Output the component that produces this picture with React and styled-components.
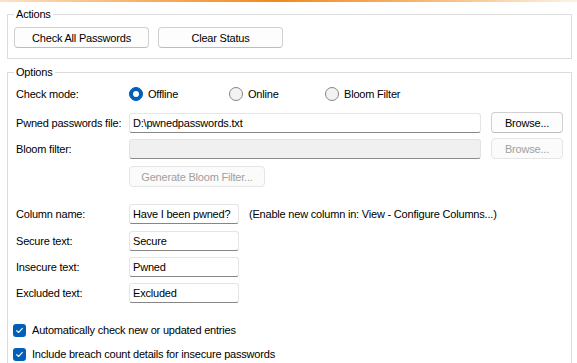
import React from "react";
import styled, { createGlobalStyle } from "styled-components";

const GlobalStyle = createGlobalStyle`
  body {
    margin: 0;
    background: #ffffff;
    font-family: "Liberation Sans", Arial, sans-serif;
    font-size: 11px;
    color: #000000;
  }
`;

const Page = styled.div`
  width: 577px;
  height: 363px;
  overflow: hidden;
  box-sizing: border-box;
  background: #ffffff;
`;

const Accent = styled.div`
  height: 2px;
  background: linear-gradient(
    to right,
    #fbe3c8 0%,
    #f6b064 25%,
    #f08a1c 48%,
    #f6b46e 72%,
    #fdf2e6 100%
  );
`;

const Content = styled.div`
  padding: 5px 5px 0 7px;
  display: flex;
  flex-direction: column;
  gap: 6px;
`;

const Group = styled.fieldset`
  margin: 0;
  min-width: 0;
  border: 1px solid #dcdcdc;
  padding: ${(p) => p.$pad};
`;

const Legend = styled.legend`
  margin-left: 1px;
  padding: 0 2px;
  line-height: 14px;
  font-size: 11px;
  letter-spacing: -0.2px;
`;

const ButtonRow = styled.div`
  display: flex;
  gap: 9px;
  padding-left: 1px;
`;

const Button = styled.button`
  box-sizing: border-box;
  width: ${(p) => p.$w}px;
  height: 21px;
  padding: 0;
  font: inherit;
  letter-spacing: -0.2px;
  color: ${(p) => (p.disabled ? "#a0a0a0" : "#000000")};
  background: ${(p) => (p.disabled ? "#fbfbfb" : "#fdfdfd")};
  border: 1px solid ${(p) => (p.disabled ? "#e5e5e5" : "#d0d0d0")};
  border-bottom-color: ${(p) => (p.disabled ? "#e5e5e5" : "#bdbdbd")};
  border-radius: 4px;
`;

const Row = styled.div`
  display: grid;
  grid-template-columns: ${(p) => p.$cols};
  column-gap: 10px;
  align-items: center;
  height: ${(p) => p.$h}px;
  margin-top: ${(p) => p.$mt}px;
`;

const Label = styled.span`
  padding-left: 3px;
  letter-spacing: -0.2px;
  white-space: nowrap;
`;

const Note = styled.span`
  letter-spacing: -0.2px;
  white-space: nowrap;
`;

const TextBox = styled.input`
  box-sizing: border-box;
  width: 100%;
  height: ${(p) => p.$h || 20}px;
  margin: 0;
  padding: 0 3px;
  font: inherit;
  letter-spacing: -0.2px;
  color: #000000;
  background: ${(p) => (p.disabled ? "#f0f0f0" : "#ffffff")};
  border: 1px solid ${(p) => (p.disabled ? "#e3e3e3" : "#e5e5e5")};
  border-bottom-color: ${(p) => (p.disabled ? "#8c8c8c" : "#868686")};
  border-radius: 3px;
  outline: none;
`;

const RadioGroup = styled.div`
  display: flex;
  align-items: center;
`;

const RadioItem = styled.label`
  display: flex;
  align-items: center;
  gap: 5px;
  width: ${(p) => (p.$w ? `${p.$w}px` : "auto")};
  letter-spacing: -0.2px;
`;

const RadioDot = styled.span`
  position: relative;
  box-sizing: border-box;
  width: 14px;
  height: 14px;
  border-radius: 50%;
  flex-shrink: 0;
  background: ${(p) => (p.$on ? "#005fb8" : "#f3f3f3")};
  border: 1px solid ${(p) => (p.$on ? "#005fb8" : "#878787")};

  &::after {
    content: "";
    display: ${(p) => (p.$on ? "block" : "none")};
    position: absolute;
    left: 3px;
    top: 3px;
    width: 6px;
    height: 6px;
    border-radius: 50%;
    background: #ffffff;
  }
`;

const CheckRow = styled.label`
  display: flex;
  align-items: center;
  gap: 6px;
  height: 16px;
  margin-top: ${(p) => p.$mt}px;
  letter-spacing: -0.2px;
`;

const CheckBox = styled.span`
  display: flex;
  align-items: center;
  justify-content: center;
  width: 13px;
  height: 13px;
  border-radius: 3px;
  background: #005fb8;
  flex-shrink: 0;
`;

function Radio({ on, w, children }) {
  return (
    <RadioItem $w={w}>
      <RadioDot $on={on} />
      {children}
    </RadioItem>
  );
}

function Check({ mt, children }) {
  return (
    <CheckRow $mt={mt}>
      <CheckBox>
        <svg width="9" height="9" viewBox="0 0 9 9">
          <polyline
            points="1.6,4.7 3.5,6.5 7.4,2.4"
            fill="none"
            stroke="#ffffff"
            strokeWidth="1.1"
            strokeLinecap="round"
            strokeLinejoin="round"
          />
        </svg>
      </CheckBox>
      {children}
    </CheckRow>
  );
}

export default function App() {
  const fileCols = "106px 352px 72px";
  const textCols = "106px 110px auto";

  return (
    <Page>
      <GlobalStyle />
      <Accent />
      <Content>
        <Group $pad="6px 5px 10px">
          <Legend>Actions</Legend>
          <ButtonRow>
            <Button $w={135}>Check All Passwords</Button>
            <Button $w={125}>Clear Status</Button>
          </ButtonRow>
        </Group>

        <Group $pad="0 5px 20px">
          <Legend>Options</Legend>

          <Row $cols="106px auto" $h={20} $mt={5}>
            <Label>Check mode:</Label>
            <RadioGroup>
              <Radio on w={100}>Offline</Radio>
              <Radio w={96}>Online</Radio>
              <Radio>Bloom Filter</Radio>
            </RadioGroup>
          </Row>

          <Row $cols={fileCols} $h={21} $mt={8}>
            <Label>Pwned passwords file:</Label>
            <TextBox defaultValue="D:\pwnedpasswords.txt" />
            <Button $w={72}>Browse...</Button>
          </Row>

          <Row $cols={fileCols} $h={21} $mt={5}>
            <Label>Bloom filter:</Label>
            <TextBox disabled defaultValue="" />
            <Button $w={72} disabled>
              Browse...
            </Button>
          </Row>

          <Row $cols={fileCols} $h={21} $mt={7}>
            <span />
            <Button $w={136} disabled>
              Generate Bloom Filter...
            </Button>
          </Row>

          <Row $cols={textCols} $h={20} $mt={17}>
            <Label>Column name:</Label>
            <TextBox defaultValue="Have I been pwned?" />
            <Note>(Enable new column in: View - Configure Columns...)</Note>
          </Row>

          <Row $cols={textCols} $h={20} $mt={7}>
            <Label>Secure text:</Label>
            <TextBox defaultValue="Secure" />
          </Row>

          <Row $cols={textCols} $h={20} $mt={6}>
            <Label>Insecure text:</Label>
            <TextBox defaultValue="Pwned" />
          </Row>

          <Row $cols={textCols} $h={20} $mt={6}>
            <Label>Excluded text:</Label>
            <TextBox defaultValue="Excluded" />
          </Row>

          <Check mt={19}>Automatically check new or updated entries</Check>
          <Check mt={8}>Include breach count details for insecure passwords</Check>
        </Group>
      </Content>
    </Page>
  );
}
